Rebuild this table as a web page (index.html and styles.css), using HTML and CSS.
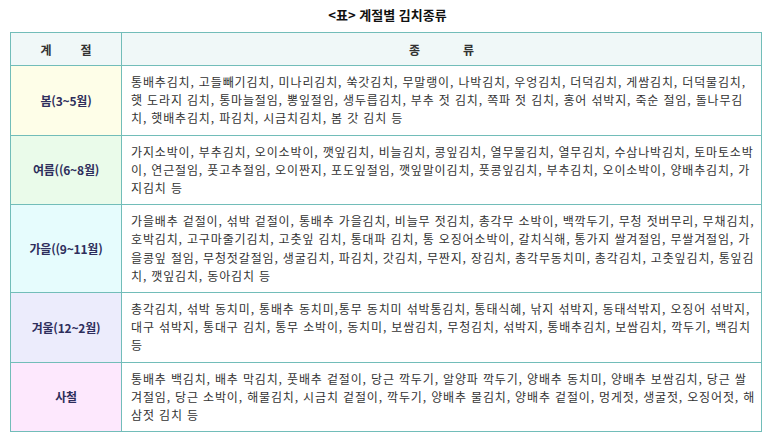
FILE: index.html
```html
<!DOCTYPE html>
<html lang="ko">
<head>
<meta charset="utf-8">
<title>계절별 김치종류</title>
<link rel="stylesheet" href="styles.css">
</head>
<body>
<div class="page">
  <h1 class="title">&lt;표&gt; 계절별 김치종류</h1>
  <table class="kimchi">
    <thead>
      <tr>
        <th class="col-season"><span class="spread">계<span class="gap1"></span>절</span></th>
        <th class="col-kinds"><span class="spread">종<span class="gap2"></span>류</span></th>
      </tr>
    </thead>
    <tbody>
      <tr class="spring">
        <td class="season">봄(3~5월)</td>
        <td class="kinds">통배추김치, 고들빼기김치, 미나리김치, 쑥갓김치, 무말랭이, 나박김치, 우엉김치, 더덕김치, 게쌈김치, 더덕물김치,<br>햇 도라지 김치, 통마늘절임, 뽕잎절임, 생두릅김치, 부추 젓 김치, 쪽파 젓 김치, 홍어 섞박지, 죽순 절임, 돌나무김<br>치, 햇배추김치, 파김치, 시금치김치, 봄 갓 김치 등</td>
      </tr>
      <tr class="summer">
        <td class="season">여름((6~8월)</td>
        <td class="kinds">가지소박이, 부추김치, 오이소박이, 깻잎김치, 비늘김치, 콩잎김치, 열무물김치, 열무김치, 수삼나박김치, 토마토소박<br>이, 연근절임, 풋고추절임, 오이짠지, 포도잎절임, 깻잎말이김치, 풋콩잎김치, 부추김치, 오이소박이, 양배추김치, 가<br>지김치 등</td>
      </tr>
      <tr class="autumn">
        <td class="season">가을((9~11월)</td>
        <td class="kinds">가을배추 겉절이, 섞박 겉절이, 통배추 가을김치, 비늘무 젓김치, 총각무 소박이, 백깍두기, 무청 젓버무리, 무채김치,<br>호박김치, 고구마줄기김치, 고춧잎 김치, 통대파 김치, 통 오징어소박이, 갈치식해, 통가지 쌀겨절임, 무쌀겨절임, 가<br>을콩잎 절임, 무청젓갈절임, 생굴김치, 파김치, 갓김치, 무짠지, 장김치, 총각무동치미, 총각김치, 고춧잎김치, 통잎김<br>치, 깻잎김치, 동아김치 등</td>
      </tr>
      <tr class="winter">
        <td class="season">겨울(12~2월)</td>
        <td class="kinds">총각김치, 섞박 동치미, 통배추 동치미,통무 동치미 섞박통김치, 통태식혜, 낚지 섞박지, 동태석밖지, 오징어 섞박지,<br>대구 섞박지, 통대구 김치, 통무 소박이, 동치미, 보쌈김치, 무청김치, 섞박지, 통배추김치, 보쌈김치, 깍두기, 백김치<br>등</td>
      </tr>
      <tr class="allyear">
        <td class="season">사철</td>
        <td class="kinds">통배추 백김치, 배추 막김치, 풋배추 겉절이, 당근 깍두기, 알양파 깍두기, 양배추 동치미, 양배추 보쌈김치, 당근 쌀<br>겨절임, 당근 소박이, 해물김치, 시금치 겉절이, 깍두기, 양배추 물김치, 양배추 겉절이, 멍게젓, 생굴젓, 오징어젓, 해<br>삼젓 김치 등</td>
      </tr>
    </tbody>
  </table>
</div>
</body>
</html>
```
FILE: styles.css
```css
html, body {
  margin: 0;
  padding: 0;
  background: #ffffff;
}

body {
  font-family: "Noto Sans CJK KR", "Noto Sans", sans-serif;
  color: #333333;
}

.page {
  padding: 6px 7px 0 10px;
}

.title {
  margin: 0 0 8px 0;
  font-size: 13px;
  line-height: 18px;
  font-weight: bold;
  color: #111111;
  text-align: center;
  padding-left: 3px;
}

.kimchi {
  width: 752px;
  border-collapse: collapse;
  table-layout: fixed;
  font-size: 12px;
}

.kimchi th,
.kimchi td {
  border: 1px solid #72bdb9;
}

.kimchi th {
  height: 32px;
  padding: 0;
  background: #f0f8f8;
  color: #333333;
  font-weight: bold;
  font-size: 12px;
  text-align: center;
}

.col-season {
  width: 110px;
}

.spread {
  display: inline-flex;
  align-items: center;
}

.gap1 {
  display: inline-block;
  width: 29px;
}

.gap2 {
  display: inline-block;
  width: 43px;
}

.season {
  text-align: center;
  font-weight: bold;
  color: #2e2e5c;
  padding: 0;
  letter-spacing: -0.2px;
}

.kinds {
  padding: 7px 2px 7px 9px;
  line-height: 18.2px;
  white-space: nowrap;
  letter-spacing: 0.85px;
  color: #333333;
}

.spring .season { background: #fefee8; }
.summer .season { background: #eafbea; }
.autumn .season { background: #e6fcfd; }
.winter .season { background: #ececfc; }
.allyear .season { background: #fde8fd; }
```
